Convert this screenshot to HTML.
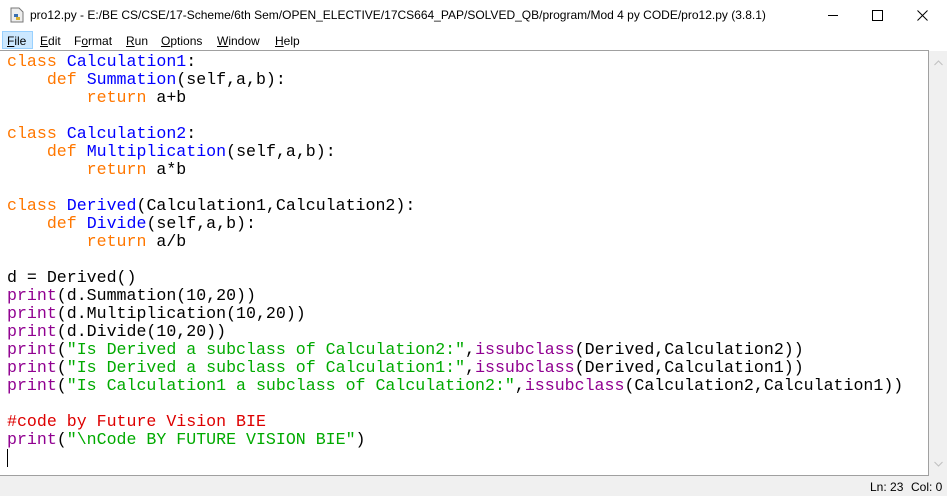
<!DOCTYPE html>
<html><head><style>
body{margin:0;width:947px;height:496px;overflow:hidden;background:#fff;font-family:"Liberation Sans",sans-serif;position:relative}
#title{position:absolute;left:0;top:0;width:947px;height:31px;background:#fff}
#title .t{position:absolute;left:30px;top:8px;font-size:12px;color:#000}
#menu{position:absolute;left:0;top:31px;width:947px;height:19px;font-size:12px}
#menu span{position:absolute;top:3px}
#menu u{text-decoration:underline}
#file{position:absolute;left:2px;top:31px;width:31px;height:18px;background:#cce8ff;border:1px solid #99d1ff;box-sizing:border-box}
#ed{position:absolute;left:0;top:50px;width:929px;height:426px;border-top:1px solid #a0a0a0;border-right:1px solid #a0a0a0;border-bottom:1px solid #a0a0a0;box-sizing:border-box}
#sb{position:absolute;left:929px;top:51px;width:18px;height:425px;background:#f0f0f0}
#status{position:absolute;left:0;top:476px;width:947px;height:20px;background:#f0f0f0;font-size:12px}
pre{position:absolute;left:7px;top:53px;margin:0;font-family:"Liberation Mono",monospace;font-size:16.6px;line-height:18px;color:#000}
.k{color:#ff7700}.d{color:#0000ff}.p{color:#900090}.s{color:#00aa00}.c{color:#dd0000}
</style></head><body>
<div id="title">
<svg style="position:absolute;left:9px;top:7px" width="16" height="16" viewBox="0 0 16 16"><path d="M2 1h8l4 4v10H2z" fill="#eee" stroke="#777"/><path d="M5 7h4v3H5z" fill="#3a6fb0"/><path d="M7 10h4v3H7z" fill="#d8b030"/></svg>
<div class="t">pro12.py - E:/BE CS/CSE/17-Scheme/6th Sem/OPEN_ELECTIVE/17CS664_PAP/SOLVED_QB/program/Mod 4 py CODE/pro12.py (3.8.1)</div>
<div style="position:absolute;left:828px;top:15px;width:10px;height:1px;background:#000"></div>
<div style="position:absolute;left:872px;top:10px;width:9px;height:9px;border:1px solid #000"></div>
<svg style="position:absolute;left:917px;top:10px" width="11" height="11"><path d="M0.5 0.5L10.5 10.5M10.5 0.5L0.5 10.5" stroke="#000"/></svg>
</div>
<div id="file"></div>
<div id="menu"><span style="left:7px"><u>F</u>ile</span><span style="left:40px"><u>E</u>dit</span><span style="left:74px">F<u>o</u>rmat</span><span style="left:126px"><u>R</u>un</span><span style="left:161px"><u>O</u>ptions</span><span style="left:217px"><u>W</u>indow</span><span style="left:275px"><u>H</u>elp</span></div>
<div id="ed"></div>
<div id="sb"><svg style="position:absolute;left:5px;top:9px" width="9" height="6"><path d="M0.5 5L4.5 1L8.5 5" stroke="#c0c0c0" fill="none"/></svg><svg style="position:absolute;left:5px;top:410px" width="9" height="6"><path d="M0.5 1L4.5 5L8.5 1" stroke="#c0c0c0" fill="none"/></svg></div>
<pre><span class="k">class</span> <span class="d">Calculation1</span>:
    <span class="k">def</span> <span class="d">Summation</span>(self,a,b):
        <span class="k">return</span> a+b

<span class="k">class</span> <span class="d">Calculation2</span>:
    <span class="k">def</span> <span class="d">Multiplication</span>(self,a,b):
        <span class="k">return</span> a*b

<span class="k">class</span> <span class="d">Derived</span>(Calculation1,Calculation2):
    <span class="k">def</span> <span class="d">Divide</span>(self,a,b):
        <span class="k">return</span> a/b

d = Derived()
<span class="p">print</span>(d.Summation(10,20))
<span class="p">print</span>(d.Multiplication(10,20))
<span class="p">print</span>(d.Divide(10,20))
<span class="p">print</span>(<span class="s">"Is Derived a subclass of Calculation2:"</span>,<span class="p">issubclass</span>(Derived,Calculation2))
<span class="p">print</span>(<span class="s">"Is Derived a subclass of Calculation1:"</span>,<span class="p">issubclass</span>(Derived,Calculation1))
<span class="p">print</span>(<span class="s">"Is Calculation1 a subclass of Calculation2:"</span>,<span class="p">issubclass</span>(Calculation2,Calculation1))

<span class="c">#code by Future Vision BIE</span>
<span class="p">print</span>(<span class="s">"\nCode BY FUTURE VISION BIE"</span>)
</pre>
<div style="position:absolute;left:7px;top:449px;width:1px;height:18px;background:#000"></div>
<div id="status"><span style="position:absolute;left:870px;top:4px">Ln: 23</span><span style="position:absolute;left:911px;top:4px">Col: 0</span></div>
</body></html>
